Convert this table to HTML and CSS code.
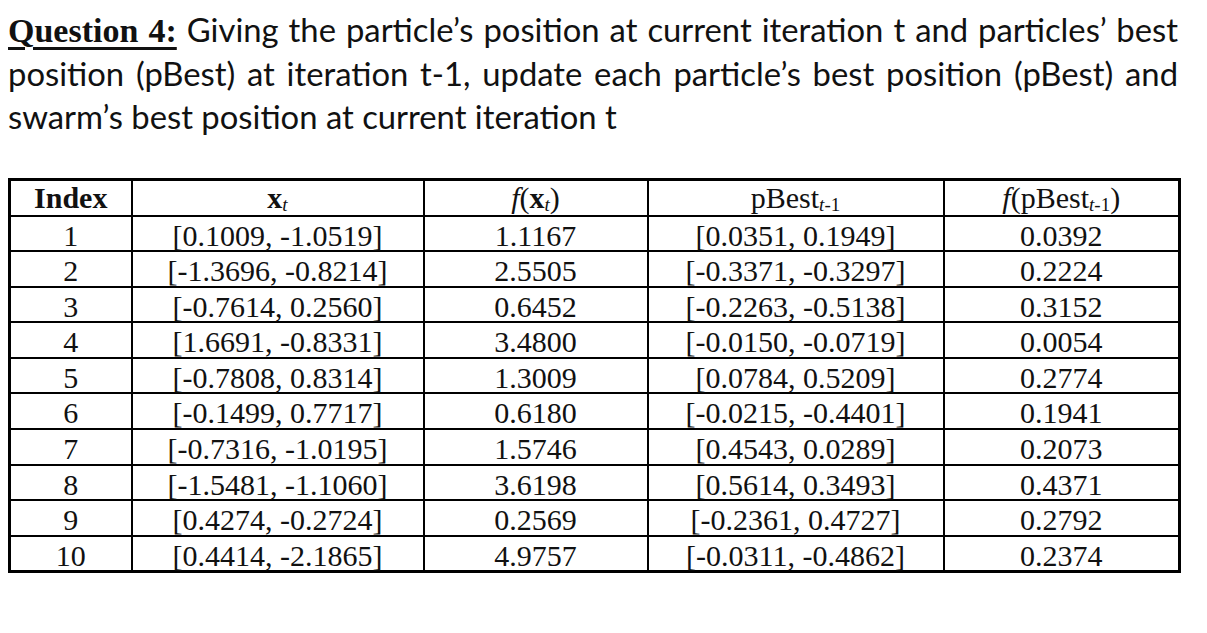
FILE: index.html
```html
<!DOCTYPE html>
<html>
<head>
<meta charset="utf-8">
<link rel="stylesheet" href="styles.css">
</head>
<body>
<div class="question">
  <div class="line just"><span class="qlabel">Question 4:</span> Giving the particle’s position at current iteration t and particles’ best</div>
  <div class="line just">position (pBest) at iteration t-1, update each particle’s best position (pBest) and</div>
  <div class="line">swarm’s best position at current iteration t</div>
</div>
<table class="data">
  <colgroup>
    <col class="c1"><col class="c2"><col class="c3"><col class="c4"><col class="c5">
  </colgroup>
  <thead>
    <tr>
      <th class="bold">Index</th>
      <th><b>x</b><sub><i>t</i></sub></th>
      <th><i>f</i>(<b>x</b><sub><i>t</i></sub>)</th>
      <th>pBest<sub><i>t</i>-1</sub></th>
      <th><i>f</i>(pBest<sub><i>t</i>-1</sub>)</th>
    </tr>
  </thead>
  <tbody>
    <tr><td>1</td><td>[0.1009, -1.0519]</td><td>1.1167</td><td>[0.0351, 0.1949]</td><td>0.0392</td></tr>
    <tr><td>2</td><td>[-1.3696, -0.8214]</td><td>2.5505</td><td>[-0.3371, -0.3297]</td><td>0.2224</td></tr>
    <tr><td>3</td><td>[-0.7614, 0.2560]</td><td>0.6452</td><td>[-0.2263, -0.5138]</td><td>0.3152</td></tr>
    <tr><td>4</td><td>[1.6691, -0.8331]</td><td>3.4800</td><td>[-0.0150, -0.0719]</td><td>0.0054</td></tr>
    <tr><td>5</td><td>[-0.7808, 0.8314]</td><td>1.3009</td><td>[0.0784, 0.5209]</td><td>0.2774</td></tr>
    <tr><td>6</td><td>[-0.1499, 0.7717]</td><td>0.6180</td><td>[-0.0215, -0.4401]</td><td>0.1941</td></tr>
    <tr><td>7</td><td>[-0.7316, -1.0195]</td><td>1.5746</td><td>[0.4543, 0.0289]</td><td>0.2073</td></tr>
    <tr><td>8</td><td>[-1.5481, -1.1060]</td><td>3.6198</td><td>[0.5614, 0.3493]</td><td>0.4371</td></tr>
    <tr><td>9</td><td>[0.4274, -0.2724]</td><td>0.2569</td><td>[-0.2361, 0.4727]</td><td>0.2792</td></tr>
    <tr><td>10</td><td>[0.4414, -2.1865]</td><td>4.9757</td><td>[-0.0311, -0.4862]</td><td>0.2374</td></tr>
  </tbody>
</table>
</body>
</html>
```
FILE: styles.css
```css
html, body {
  background: #ffffff;
}
body {
  margin: 8px;
  color: #000000;
}
.question {
  width: 1170px;
  font-family: Lato, "Liberation Sans", sans-serif;
  font-size: 32.8px;
  line-height: 43px;
  color: #111111;
}
.just {
  text-align: justify;
  text-align-last: justify;
}
.qlabel {
  font-family: "Liberation Serif", serif;
  font-weight: bold;
  font-size: 34px;
  text-decoration: underline;
  text-decoration-thickness: 3px;
  text-underline-offset: 5px;
}
.data {
  margin-top: 40px;
  width: 1172px;
  table-layout: fixed;
  border-collapse: collapse;
  border: 3px solid #000;
  font-family: "Liberation Serif", serif;
  font-size: 30px;
  color: #111;
}
.c1 { width: 122px; }
.c2 { width: 292px; }
.c3 { width: 224px; }
.c4 { width: 296px; }
.c5 { width: 236px; }
.data th, .data td {
  border: 2px solid #000;
  text-align: center;
  font-weight: normal;
  vertical-align: top;
}
.data th {
  padding: 0;
  line-height: 33.5px;
}
.data td {
  padding: 4px 0 0 0;
  line-height: 29.6px;
}
.data th.bold {
  font-weight: bold;
}
.data sub {
  font-size: 19px;
  vertical-align: -3px;
  line-height: 0;
}
```
